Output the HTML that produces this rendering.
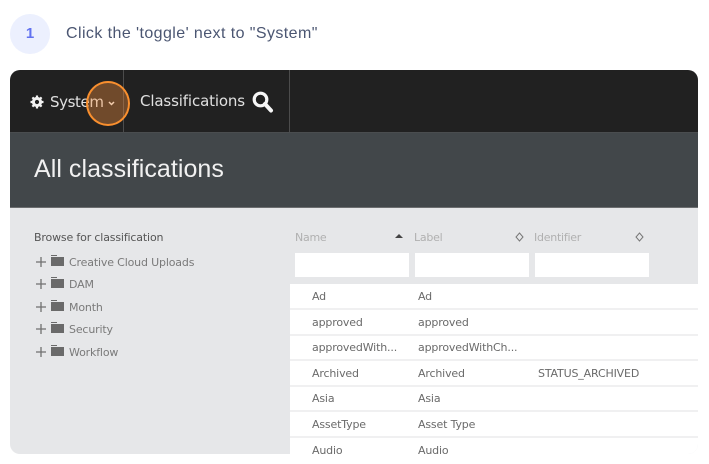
<!DOCTYPE html>
<html><head><meta charset="utf-8"><style>
html,body{margin:0;padding:0;background:#fff}
body{width:709px;height:464px;position:relative;overflow:hidden;font-family:"DejaVu Sans","Liberation Sans",sans-serif}
.a{position:absolute;white-space:nowrap}
#img{position:absolute;left:10px;top:70px;width:688px;height:384px;border-radius:10px;overflow:hidden;background:#e6e7e9}
.t{font-size:11px;color:#7a7a7a;letter-spacing:-.16px;line-height:14px}
.row{position:absolute;left:280px;width:408px;background:#fff;border-bottom:2px solid #f0f0f1}
.row span{position:absolute;top:6px;font-size:11px;line-height:14px;color:#6a6a6a;letter-spacing:-.16px;white-space:nowrap}
.row.s span{top:5px}
.c1{left:22px}.c2{left:128px}.c3{left:248px}
.inp{position:absolute;top:183px;width:114px;height:24px;background:#fff}
.h{position:absolute;top:161px;font-size:11px;line-height:14px;color:#b0b0b0;letter-spacing:-.25px}
.p{position:absolute;left:26px;width:10px;height:10px}
</style></head><body>
<div class="a" style="left:10px;top:14px;width:40px;height:40px;border-radius:50%;background:#ecf0fe;color:#6272f0;font:bold 15px/40px 'Liberation Sans',sans-serif;text-align:center">1</div>
<div class="a" style="left:66px;top:24px;font:16px/20px 'Liberation Sans',sans-serif;letter-spacing:.42px;color:#4b5672">Click the 'toggle' next to "System"</div>
<div id="img">
<div class="a" style="left:0;top:0;width:688px;height:62px;background:#212121"></div>
<div class="a" style="left:113px;top:0;width:1px;height:62px;background:#4c4c4c"></div>
<div class="a" style="left:279px;top:0;width:1px;height:62px;background:#4c4c4c"></div>
<svg class="a" style="left:20px;top:25px" width="14" height="14" viewBox="0 0 14 14"><circle cx="7" cy="7" r="3.6" fill="none" stroke="#f2f2f2" stroke-width="3"/><path d="M7 .5V3M7 11v2.500M.5 7H3M11 7h2.500M2.400 2.400l1.800 1.800M9.800 9.800l1.800 1.800M2.400 11.600l1.800-1.800M9.800 4.200l1.800-1.800" stroke="#f2f2f2" stroke-width="2.200"/></svg>
<div class="a" style="left:40px;top:22px;font-size:15px;line-height:20px;color:#e0e0e0;letter-spacing:-.4px">System</div>
<svg class="a" style="left:98px;top:31px" width="7" height="5" viewBox="0 0 7 5"><path d="M1 1l2.500 2.500L6 1" fill="none" stroke="#eee" stroke-width="1.500"/></svg>
<div class="a" style="left:130px;top:21px;font-size:15px;line-height:20px;color:#e0e0e0;letter-spacing:-.14px">Classifications</div>
<svg class="a" style="left:242px;top:21px" width="22" height="23" viewBox="0 0 22 23"><circle cx="8.500" cy="8.500" r="6.300" fill="none" stroke="#f7f7f7" stroke-width="3.200"/><path d="M13 13l6 6.500" stroke="#f7f7f7" stroke-width="4" stroke-linecap="round"/></svg>
<div class="a" style="left:0;top:62px;width:688px;height:76px;background:#42474a;border-top:1px solid #4a4d4f;box-sizing:border-box;border-bottom:1px solid #6c6e70"></div>
<div class="a" style="left:24px;top:82px;font:25px/34px 'Liberation Sans',sans-serif;color:#f1f1f1;letter-spacing:.05px">All classifications</div>
<div class="a t" style="left:24px;top:161px;color:#555">Browse for classification</div>
<svg class="p" style="top:187px"><path d="M5 0v10M0 5h10" stroke="#707070" stroke-width="1.300"/></svg>
<svg class="p" style="top:209px"><path d="M5 0v10M0 5h10" stroke="#707070" stroke-width="1.300"/></svg>
<svg class="p" style="top:232px"><path d="M5 0v10M0 5h10" stroke="#707070" stroke-width="1.300"/></svg>
<svg class="p" style="top:254px"><path d="M5 0v10M0 5h10" stroke="#707070" stroke-width="1.300"/></svg>
<svg class="p" style="top:277px"><path d="M5 0v10M0 5h10" stroke="#707070" stroke-width="1.300"/></svg>
<svg class="a" style="left:41px;top:185px" width="14" height="11"><path d="M0 0h6v1H0zM0 2h13v9H0z" fill="#6a6a6a"/></svg>
<svg class="a" style="left:41px;top:207px" width="14" height="11"><path d="M0 0h6v1H0zM0 2h13v9H0z" fill="#6a6a6a"/></svg>
<svg class="a" style="left:41px;top:230px" width="14" height="11"><path d="M0 0h6v1H0zM0 2h13v9H0z" fill="#6a6a6a"/></svg>
<svg class="a" style="left:41px;top:252px" width="14" height="11"><path d="M0 0h6v1H0zM0 2h13v9H0z" fill="#6a6a6a"/></svg>
<svg class="a" style="left:41px;top:275px" width="14" height="11"><path d="M0 0h6v1H0zM0 2h13v9H0z" fill="#6a6a6a"/></svg>
<div class="a t" style="left:59px;top:186px">Creative Cloud Uploads</div>
<div class="a t" style="left:59px;top:208px">DAM</div>
<div class="a t" style="left:59px;top:231px">Month</div>
<div class="a t" style="left:59px;top:253px">Security</div>
<div class="a t" style="left:59px;top:276px">Workflow</div>
<div class="h" style="left:285px">Name</div><div class="h" style="left:404px">Label</div><div class="h" style="left:524px">Identifier</div>
<svg class="a" style="left:385px;top:163px" width="8" height="6"><path d="M0 5l4-4 4 4z" fill="#444"/></svg>
<svg class="a" style="left:505px;top:162px" width="9" height="10"><path d="M4.500 1L8 5 4.500 9 1 5z" fill="none" stroke="#777"/></svg>
<svg class="a" style="left:625px;top:162px" width="9" height="10"><path d="M4.500 1L8 5 4.500 9 1 5z" fill="none" stroke="#777"/></svg>
<div class="inp" style="left:285px"></div><div class="inp" style="left:405px"></div><div class="inp" style="left:525px"></div>
<div class="row" style="top:214px;height:24px"><span class="c1">Ad</span><span class="c2">Ad</span></div>
<div class="row" style="top:240px;height:24px"><span class="c1">approved</span><span class="c2">approved</span></div>
<div class="row s" style="top:266px;height:23px"><span class="c1">approvedWith...</span><span class="c2">approvedWithCh...</span></div>
<div class="row" style="top:291px;height:24px"><span class="c1">Archived</span><span class="c2">Archived</span><span class="c3">STATUS_ARCHIVED</span></div>
<div class="row s" style="top:317px;height:23px"><span class="c1">Asia</span><span class="c2">Asia</span></div>
<div class="row" style="top:342px;height:24px"><span class="c1">AssetType</span><span class="c2">Asset Type</span></div>
<div class="row" style="top:368px;height:18px;border:0"><span class="c1">Audio</span><span class="c2">Audio</span></div>
</div>
<div class="a" style="left:86px;top:81px;width:44px;height:45px;box-sizing:border-box;border-radius:50%;border:2px solid #f98f2e;background:rgba(251,146,60,.36)"></div>
</body></html>
